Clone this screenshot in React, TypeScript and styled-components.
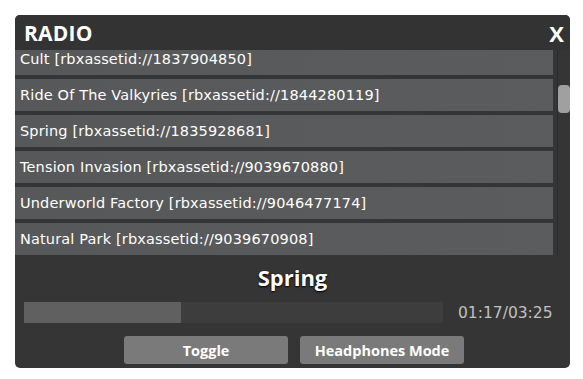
import styled, { createGlobalStyle } from "styled-components";

const Global = createGlobalStyle`
    html, body {
        margin: 0;
        padding: 0;
        background: #ffffff;
        width: 583px;
        height: 379px;
        overflow: hidden;
    }
    * {
        box-sizing: border-box;
    }
`;

const Page = styled.div`
    padding: 15px 0 0 15px;
    font-family: "Open Sans", "DejaVu Sans", sans-serif;
`;

const Window = styled.div`
    width: 555px;
    height: 353px;
    background: #353535;
    border-radius: 5px;
    display: flex;
    flex-direction: column;
    overflow: hidden;
`;

const Header = styled.div`
    height: 35px;
    display: flex;
    align-items: center;
    justify-content: space-between;
    padding: 0 6px 0 9px;
    background: #333333;
`;

const Title = styled.div`
    color: #ffffff;
    font-size: 21px;
    font-weight: 700;
    letter-spacing: 0.2px;
`;

const Close = styled.div`
    color: #ffffff;
    font-size: 22px;
    font-weight: 700;
`;

const ListArea = styled.div`
    height: 205px;
    display: flex;
    overflow: hidden;
`;

const List = styled.div`
    width: 538px;
    display: flex;
    flex-direction: column;
    gap: 4px;
    margin-top: -7px;
`;

const Row = styled.div`
    flex: 0 0 32px;
    background: linear-gradient(90deg, #575859, #5b5c5d);
    color: #ffffff;
    font-family: "DejaVu Sans", sans-serif;
    font-size: 14.5px;
    display: flex;
    align-items: center;
    padding-left: 5px;
    letter-spacing: 0.15px;
`;

const Scroll = styled.div`
    flex: 1;
    position: relative;
    border-left: 1px solid #2a2d30;
    margin-left: 4px;
`;

const Thumb = styled.div`
    position: absolute;
    top: 35px;
    left: 0;
    width: 12px;
    height: 28px;
    background: #a0a0a0;
    border-radius: 4px;
`;

const NowPlaying = styled.div`
    height: 44px;
    display: flex;
    align-items: center;
    justify-content: center;
    color: #ffffff;
    font-size: 22px;
    font-weight: 700;
    text-shadow: 0 1px 2px #000, 0 0 1px #000;
`;

const ProgressRow = styled.div`
    display: flex;
    align-items: center;
    padding: 3px 0 0 9px;
    gap: 15px;
`;

const Track = styled.div`
    width: 419px;
    height: 21px;
    background: #3d3d3d;
`;

const Fill = styled.div`
    height: 100%;
    background: #606060;
`;

const Time = styled.div`
    color: #c0c0c0;
    font-family: "DejaVu Sans", sans-serif;
    font-size: 15.5px;
`;

const Buttons = styled.div`
    display: flex;
    justify-content: center;
    gap: 12px;
    padding-top: 13px;
    padding-left: 3px;
`;

const Button = styled.div`
    width: 164px;
    height: 28px;
    background: #7a7a7a;
    border-radius: 3px;
    color: #ffffff;
    font-size: 14.5px;
    font-weight: 700;
    display: flex;
    align-items: center;
    justify-content: center;
`;

const songs = [
    "Cult [rbxassetid://1837904850]",
    "Ride Of The Valkyries [rbxassetid://1844280119]",
    "Spring [rbxassetid://1835928681]",
    "Tension Invasion [rbxassetid://9039670880]",
    "Underworld Factory [rbxassetid://9046477174]",
    "Natural Park [rbxassetid://9039670908]",
];

export default function App() {
    const progress = 77 / 205;
    return (
        <Page>
            <Global />
            <Window>
                <Header>
                    <Title>RADIO</Title>
                    <Close>X</Close>
                </Header>
                <ListArea>
                    <List>
                        {songs.map((s) => (
                            <Row key={s}>{s}</Row>
                        ))}
                    </List>
                    <Scroll>
                        <Thumb />
                    </Scroll>
                </ListArea>
                <NowPlaying>Spring</NowPlaying>
                <ProgressRow>
                    <Track>
                        <Fill style={{ width: `${progress * 100}%` }} />
                    </Track>
                    <Time>01:17/03:25</Time>
                </ProgressRow>
                <Buttons>
                    <Button>Toggle</Button>
                    <Button>Headphones Mode</Button>
                </Buttons>
            </Window>
        </Page>
    );
}
